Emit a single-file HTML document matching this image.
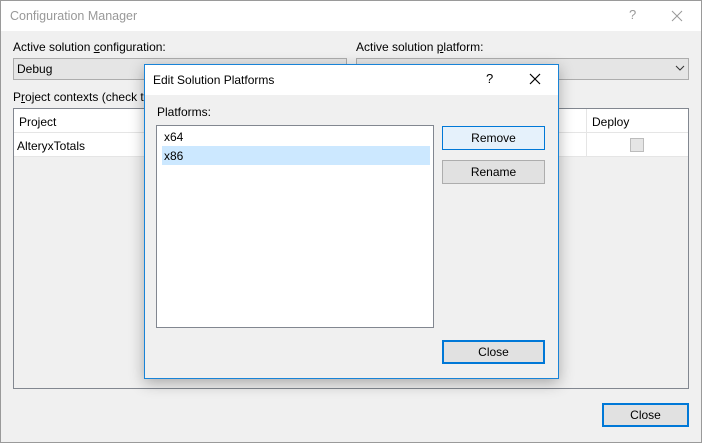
<!DOCTYPE html>
<html><head><style>
*{box-sizing:border-box;margin:0;padding:0}
body{width:702px;height:443px;overflow:hidden;background:#f0f0f0;font-family:"Liberation Sans",sans-serif;font-size:12px;color:#000;position:relative}
.a{position:absolute}
.t{position:absolute;white-space:nowrap;line-height:14px}
.btn{position:absolute;background:#e1e1e1;border:1px solid #adadad;text-align:center;line-height:23px;font-size:12px}
.blue2{border:2px solid #0078d7;line-height:21px}
</style></head><body>
<div class="a" style="left:0;top:0;width:702px;height:443px;border:1px solid #9a9a9a"></div>
<div class="a" style="left:1px;top:1px;width:700px;height:30px;background:#fff"></div>
<div class="t" style="left:10px;top:9px;color:#999;font-size:12.5px">Configuration Manager</div>
<div class="t" style="left:629px;top:8px;color:#999;font-size:13px">?</div>
<svg class="a" style="left:671px;top:10px" width="12" height="12"><path d="M1 1L11 11M11 1L1 11" stroke="#999" stroke-width="1"/></svg>

<div class="t" style="left:13px;top:40px">Active solution <u>c</u>onfiguration:</div>
<div class="a" style="left:13px;top:58px;width:334px;height:22px;background:#e5e5e5;border:1px solid #adadad"></div>
<div class="t" style="left:17px;top:62px">Debug</div>
<div class="t" style="left:356px;top:40px">Active solution <u>p</u>latform:</div>
<div class="a" style="left:356px;top:58px;width:333px;height:22px;background:#e5e5e5;border:1px solid #adadad"></div>
<svg class="a" style="left:675px;top:65px" width="10" height="7"><path d="M1 1L5 5L9 1" stroke="#333" fill="none"/></svg>
<div class="t" style="left:13px;top:90px">P<u>r</u>oject contexts (check the project configurations to build or deploy):</div>

<div class="a" style="left:13px;top:108px;width:676px;height:281px;border:1px solid #828790;background:#f0f0f0"></div>
<div class="a" style="left:14px;top:109px;width:674px;height:24px;background:#fff;border-bottom:1px solid #e5e5e5"></div>
<div class="a" style="left:14px;top:133px;width:674px;height:24px;background:#fff;border-bottom:1px solid #e5e5e5"></div>
<div class="a" style="left:586px;top:109px;width:1px;height:48px;background:#e5e5e5"></div>
<div class="t" style="left:592px;top:115px">Deploy</div>
<div class="t" style="left:19px;top:115px">Project</div>
<div class="t" style="left:17px;top:139px">AlteryxTotals</div>
<div class="a" style="left:630px;top:138px;width:14px;height:14px;background:#e5e5e5;border:1px solid #bcbcbc"></div>

<div class="btn blue2" style="left:602px;top:403px;width:87px;height:24px">Close</div>

<!-- dialog -->
<div class="a" style="left:144px;top:64px;width:415px;height:315px;border:1px solid #1883d7;background:#f0f0f0;box-shadow:0 4px 14px rgba(0,0,0,0.3)"></div>
<div class="a" style="left:145px;top:65px;width:413px;height:30px;background:#fff"></div>
<div class="t" style="left:153px;top:73px">Edit Solution Platforms</div>
<div class="t" style="left:486px;top:72px;font-size:13px">?</div>
<svg class="a" style="left:529px;top:73px" width="12" height="12"><path d="M1 1L11 11M11 1L1 11" stroke="#000" stroke-width="1.2"/></svg>
<div class="t" style="left:157px;top:105px">Platforms:</div>
<div class="a" style="left:156px;top:125px;width:278px;height:203px;background:#fff;border:1px solid #828790"></div>
<div class="a" style="left:162px;top:146px;width:268px;height:19px;background:#cce8ff"></div>
<div class="t" style="left:164px;top:130px">x64</div>
<div class="t" style="left:164px;top:149px">x86</div>
<div class="btn" style="left:442px;top:126px;width:103px;height:24px;background:#e5f1fb;border-color:#0078d7">Remove</div>
<div class="btn" style="left:442px;top:160px;width:103px;height:24px">Rename</div>
<div class="btn blue2" style="left:442px;top:340px;width:103px;height:24px">Close</div>
</body></html>
